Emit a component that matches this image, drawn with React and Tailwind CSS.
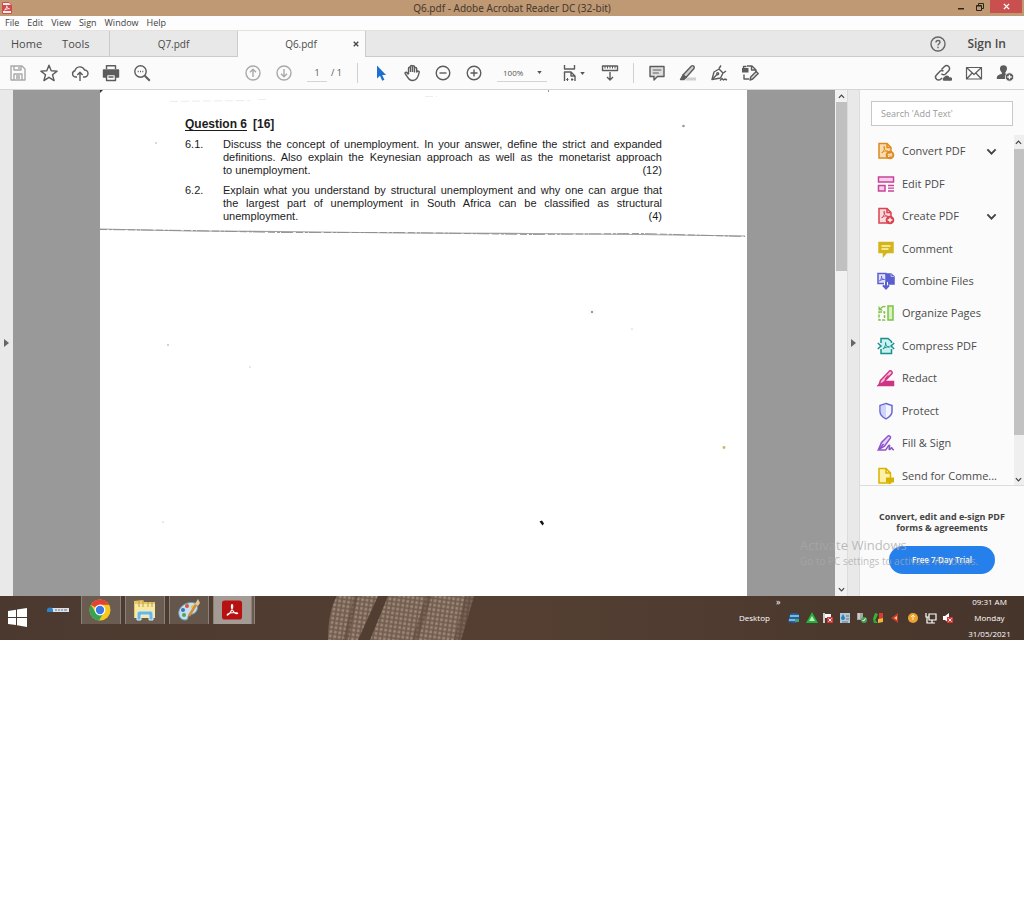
import React from "react";

const TOOL_PATHS = {
  save: (
    <>
      <path d="M2 2h11l3 3v11H2z" />
      <path d="M5 2v4h7V2M10 3v2M5 16v-6h8v6M7 12h4M7 14h4" />
    </>
  ),
  star: <path d="M9 1.200l2.200 5.600 5.900.3-4.600 3.700 1.600 5.800L9 13.300l-5.100 3.300 1.600-5.800L.900 7.100l5.900-.3z" />,
  cloud: (
    <>
      <path d="M6 13H4.500A3.200 3.200 0 0 1 4 6.700 5 5 0 0 1 13.500 6 3.500 3.500 0 0 1 13.500 13H12" />
      <path d="M9 17V8.500M6.300 11L9 8.200l2.700 2.800" />
    </>
  ),
  print: (
    <>
      <path d="M4.500 5V1.800h9V5" />
      <path d="M1.500 6h15v7h-3v-3h-9v3h-3z" fill="currentColor" />
      <path d="M4.500 10.500h9v6h-9zM6.500 13h5" />
    </>
  ),
  search: (
    <>
      <circle cx="7.500" cy="7.500" r="5.700" />
      <path d="M11.800 11.800l5 5" strokeWidth="2" />
      <path d="M4.700 7.500h1M7 7.500h1M9.300 7.500h1" />
    </>
  ),
  up: (
    <>
      <circle cx="9" cy="9" r="7" />
      <path d="M9 13V5.500M6 8.300l3-3 3 3" />
    </>
  ),
  down: (
    <>
      <circle cx="9" cy="9" r="7" />
      <path d="M9 5v7.500M6 9.700l3 3 3-3" />
    </>
  ),
  hand: (
    <path d="M5.500 10V4.500c0-1.600 2-1.600 2 0V8M7.500 8V2.600c0-1.500 2-1.500 2 0V8M9.500 8V2.800c0-1.500 2-1.500 2 0V8.500M11.500 8.500V4.500c0-1.500 2.200-1.400 2.200.2V8c1-1.500 2.800-1 2.500.3-.7 3.400-1.500 8.200-6.200 8.200-4 0-5-2.500-7.800-6.800-.8-1.300 1-2 1.800-1l1.500 1.800" />
  ),
  minus: (
    <>
      <circle cx="9" cy="9" r="6.800" />
      <path d="M5.500 9h7" />
    </>
  ),
  plus: (
    <>
      <circle cx="9" cy="9" r="6.800" />
      <path d="M5.500 9h7M9 5.500v7" />
    </>
  ),
  fit: (
    <>
      <path d="M3.500 1v4h10V1M3.500 17V8h6.500l4 4v5M10 8v4h4" />
      <path d="M5.500 15.500h2M10 15.500h2M7 14l-1.500 1.500L7 17M10.500 14l1.500 1.500-1.500 1.500" strokeWidth="1" />
    </>
  ),
  keyboard: (
    <>
      <path d="M1.500 2h15v4.500h-15z" />
      <path d="M4 2v2.500M6.500 2v2.500M9 2v2.500M11.500 2v2.500M14 2v2.500" strokeWidth="1" />
      <path d="M9 8v8M6 13l3 3 3-3" />
    </>
  ),
  comment: (
    <>
      <path d="M2 2.500h14v10H9.500L6 16v-3.500H2z" fill="#dedede" />
      <path d="M4.800 6h8.500M4.800 9h6" strokeWidth="1.200" />
    </>
  ),
  highlight: (
    <>
      <path d="M6 16.500h11v-3h-8z" fill="#d0d0d0" stroke="none" />
      <path d="M4 11l8.500-9c1.500-1 3.500.5 2.500 2.500L7 13.500z" fill="#cfcfcf" />
      <path d="M4 11l3 2.500-2 2H1.500z" fill="currentColor" />
    </>
  ),
  fountain: (
    <>
      <path d="M2 15.500l2-7.500 5-3 4 4-2.500 5z" />
      <path d="M9 4.500l2-3M13.300 9l2.700-2M2 15.500l5-5" />
      <circle cx="7.700" cy="9.800" r="1" />
      <path d="M10 16.500l2-2 1.500 1.500 1.300-1 2.200 1" />
    </>
  ),
  more: (
    <>
      <path d="M1 4h6.500v4.500H1z" fill="currentColor" stroke="none" />
      <path d="M2.500 4V2.500h3M6 2h5l4 4v2M10.500 2v4h4.500M3 10.500V15h5" />
      <path d="M9 16l.7-3 5.500-5.500 2 2-5.500 5.500z" fill="#ddd" />
    </>
  ),
  link: (
    <>
      <path d="M7.500 5.500L10.500 2.500a2.900 2.900 0 0 1 4.200 4.200L11.500 10a2.900 2.900 0 0 1-4.100-.2M9.500 7.200a2.900 2.900 0 0 0-4 .5L2.500 11a2.900 2.900 0 0 0 4.200 4.200L8 14" strokeWidth="1.500" />
      <path d="M9.500 16.700a2 2 0 0 1 .6-3.500 3 3 0 0 1 5.500.2 1.800 1.800 0 0 1 1.500 3.300z" fill="currentColor" stroke="none" />
    </>
  ),
  mail: <path d="M1.500 3.500h15v11.500h-15zM1.500 3.500L9 10.500l7.500-7M1.500 15l5.700-6M16.500 15l-5.700-6" strokeWidth="1.200" />,
  person: (
    <>
      <path d="M7.500 1.300c5 0 3.800 5.500 1.800 7.200 0 1.500 1 1.700 2.200 2.200-2 1-2.500 2.500-2.300 4.300H.8c0-3 .8-4.200 4.700-5 .7-.3.500-1.200 0-1.800C3.500 6.300 3 1.300 7.500 1.300z" fill="currentColor" stroke="none" />
      <circle cx="13.500" cy="13" r="4.200" fill="currentColor" stroke="#fbfbfb" strokeWidth="0.800" />
      <path d="M13.500 10.800v4.400M11.300 13h4.400" stroke="#fbfbfb" strokeWidth="1.300" />
    </>
  ),
};

function Glyph({ name }) {
  return (
    <svg viewBox="0 0 18 18" className="size-[18px] shrink-0" fill="none" stroke="currentColor" strokeWidth="1.400" strokeLinejoin="round" aria-hidden="true">
      {TOOL_PATHS[name]}
    </svg>
  );
}

function ToolButton({ name, label, faded }) {
  return (
    <button type="button" aria-label={label} className={faded ? "flex h-8 w-[31px] shrink-0 items-center justify-center text-[#a9a9a9]" : "flex h-8 w-[31px] shrink-0 items-center justify-center text-[#5c5c5c]"}>
      <Glyph name={name} />
    </button>
  );
}

function Caret() {
  return (
    <svg viewBox="0 0 6 4" className="h-[3px] w-[5px] shrink-0" aria-hidden="true">
      <path d="M0 0h6L3 4z" fill="#555" />
    </svg>
  );
}

function Chevron({ dir, className }) {
  const d = dir === "up" ? "M1 5.500l3-3 3 3" : "M1 2.500l3 3 3-3";
  return (
    <svg viewBox="0 0 8 8" className={className} fill="none" stroke="#444" strokeWidth="1.400" aria-hidden="true">
      <path d={d} />
    </svg>
  );
}

const SQUIGGLE = "M4.500 11c3-2.500 3.500-5 3-6.500-.6-.8-1 .3-.6 1.500.7 2 2 3 4 3.500M5 11c1.500-2 3.500-2.300 6-1.700";

const TOOLS = [
  { name: "Convert PDF", more: true, color: "#dd8a1e", art: (
    <>
      <path d="M2 1.500h8l4 4V16H2z" fill="#fbdcb0" />
      <path d="M10 1.500v4h4" />
      <path d={SQUIGGLE} strokeWidth="0.900" />
      <circle cx="13" cy="13" r="4.300" fill="#dd8a1e" stroke="none" />
      <path d="M10.700 12.300h4.200l-1.200-1.200M15.300 13.900h-4.200l1.200 1.200" stroke="#fff" strokeWidth="0.900" />
    </>
  ) },
  { name: "Edit PDF", color: "#c8449c", art: (
    <>
      <path d="M1.500 2h15v5h-15zM1.500 10.500H8V16H1.500z" fill="#f9cfe8" />
      <path d="M11 10.500h6M11 13.200h6M11 16h6" strokeWidth="1.300" />
    </>
  ) },
  { name: "Create PDF", more: true, color: "#d9444f", art: (
    <>
      <path d="M2 1.500h8l4 4V16H2z" fill="#fbdadd" />
      <path d="M10 1.500v4h4" />
      <path d={SQUIGGLE} strokeWidth="0.900" />
      <circle cx="13" cy="13" r="4.300" fill="#d9444f" stroke="none" />
      <path d="M10.700 13h4.600M13 10.700v4.600" stroke="#fff" strokeWidth="1.300" />
    </>
  ) },
  { name: "Comment", color: "#d4b51c", art: (
    <>
      <path d="M2 2.500h14v10H9.500L6.500 16v-3.500H2z" fill="#d4b51c" />
      <path d="M4.500 6h9M4.500 9h7" stroke="#fff6b8" strokeWidth="1.300" />
    </>
  ) },
  { name: "Combine Files", color: "#5a5fd0", art: (
    <>
      <path d="M9.500 2h4.500l3 2.500V12H9.500z" fill="#5a5fd0" />
      <path d="M14 2v2.500h3" stroke="#c9cbf5" strokeWidth="0.800" />
      <path d="M1 1.500h8v10H1z" fill="#dfe0fb" />
      <path d="M2.500 9C4.500 7 5 5 4.500 4c-.5 2 1 3.500 3 3.500-2-.2-3.500.3-5 1.500" strokeWidth="0.900" />
      <path d="M9 10v6" stroke="#fbfbfb" strokeWidth="4" />
      <path d="M9 10v6M6 13.300L9 16.500l3-3.200" strokeWidth="2" />
    </>
  ) },
  { name: "Organize Pages", color: "#7fc149", art: (
    <>
      <path d="M11 2h5v14h-5z" fill="#d7f3bd" />
      <path d="M2 8h5.500v8H2z" strokeDasharray="3 1.300" />
      <path d="M4 4.500c1-2 3-2.500 4.500-1.500" />
      <path d="M1.500 2v4.500H6z" fill="#7fc149" stroke="none" />
    </>
  ) },
  { name: "Compress PDF", color: "#17908f", art: (
    <>
      <path d="M4 6V1.500h7l3.500 3V6M4 12v4.500h10.500V12" fill="#c9f1ef" />
      <path d="M4 6h10.500v6H4z" fill="#c9f1ef" stroke="none" />
      <path d="M.800 6L4 9 .800 12M17.200 6L14 9l3.200 3" />
      <path d="M6 12c2.500-2.500 3-5 2.500-6.500-.5 2 1.500 4.500 4 4.500-2.500-.3-4.500.3-6.500 2" strokeWidth="1" />
    </>
  ) },
  { name: "Redact", color: "#cf3485", art: (
    <>
      <path d="M9 12.500h7.500v4H1.500l3-2z" fill="#cf3485" />
      <path d="M3.500 11.500l9-9.500c1.500-.8 3.300.8 2.500 2.500L6.500 13.500 2 16z" fill="#fac4df" />
      <path d="M8 10.500l3.500-4" />
    </>
  ) },
  { name: "Protect", color: "#6668d2", art: (
    <>
      <path d="M9 1.500l6 2v6c0 3.500-3.500 6-6 7.300-2.500-1.300-6-3.800-6-7.300v-6z" fill="#f4f4ff" />
      <path d="M9 2.300v13.600c-2.200-1.200-5.200-3.400-5.200-6.400V4z" fill="#cfd4fb" stroke="none" />
    </>
  ) },
  { name: "Fill & Sign", color: "#8d55cb", art: (
    <>
      <path d="M1.500 15.500l3-7 6.500-6.500c1.300-.7 3 .5 2.300 2.200l-5.800 8z" fill="#e6d4fa" />
      <path d="M1.500 16h7c2-2 2.500-5 4-4.700 1 .4-1.500 4.500.3 4.200 1.200-.2 1-2 1.900-1.800.8.300 0 2.300 2.300 2M2 15.500l4.500-5.500" />
    </>
  ) },
  { name: "Send for Comme...", color: "#d8b200", art: (
    <>
      <path d="M2 1.500h7l4.500 4.500v10H2z" fill="#fff0a8" />
      <path d="M9 1.500V6h4.500" />
      <path d="M9 10.500h8v5h-3l-2 2v-2H9z" fill="#d8b200" stroke="none" />
    </>
  ) },
];

function ToolRow({ tool }) {
  return (
    <li className="flex items-center">
      <button type="button" className="flex w-full items-center gap-[7px] pl-[17px] pr-[17px] text-left text-[11px] leading-4 text-[#4b4b4b]">
        <svg viewBox="0 0 18 18" className="size-[18px] shrink-0" fill="none" stroke={tool.color} strokeWidth="1.500" aria-hidden="true">
          {tool.art}
        </svg>
        <span className="grow whitespace-nowrap">{tool.name}</span>
        {tool.more && <Chevron dir="down" className="size-[11px]" />}
      </button>
    </li>
  );
}

function TitleBar() {
  return (
    <header className="flex h-4 items-start bg-[#bf9974] text-[#46382c]">
      <div className="flex h-4 flex-1 items-center pl-[2px]">
        <svg viewBox="0 0 10 12" className="h-3 w-[10px]" aria-hidden="true">
          <path d="M.5.500h6.500l2.500 2.500v8.500h-9z" fill="#fbeeee" stroke="#d2494b" />
          <path d="M1 3h8v6H1z" fill="#d2494b" />
          <path d="M2.500 8.200c1.700-1.500 2.300-3.400 2.200-4.400.2 2 1.300 2.700 2.800 2.900-1.500 0-3.500.3-5 1.500z" stroke="#fff" strokeWidth="0.800" fill="none" />
        </svg>
      </div>
      <h1 className="font-['Noto_Sans',sans-serif] text-[10px] leading-4">Q6.pdf - Adobe Acrobat Reader DC (32-bit)</h1>
      <div className="flex flex-1 items-start justify-end pr-[2px]">
        <button type="button" aria-label="Minimize" className="flex h-[13px] w-[18px] items-center justify-center">
          <svg viewBox="0 0 8 8" className="size-2" aria-hidden="true"><path d="M1 5h6v1.500H1z" fill="#2d231b" /></svg>
        </button>
        <button type="button" aria-label="Restore" className="flex h-[13px] w-5 items-center justify-center">
          <svg viewBox="0 0 8 8" className="size-2" fill="none" stroke="#2d231b" aria-hidden="true"><path d="M.5 2.500h5v5h-5zM.5 3h5M2.500 2.500v-2h5v5h-2" /></svg>
        </button>
        <button type="button" aria-label="Close" className="flex h-[13px] w-8 items-center justify-center bg-[#c9504f]">
          <svg viewBox="0 0 8 8" className="size-[7px]" stroke="#fff" strokeWidth="1.600" aria-hidden="true"><path d="M1 1l6 6M7 1L1 7" /></svg>
        </button>
      </div>
    </header>
  );
}

function MenuBar() {
  return (
    <nav className="flex h-[15px] items-center gap-2 border-b border-[#e6e1da] bg-[#fdfdfd] pl-[5px] text-[9px] leading-3 text-[#3f3f3f]">
      {["File", "Edit", "View", "Sign", "Window", "Help"].map((m) => (
        <button type="button" key={m}>{m}</button>
      ))}
    </nav>
  );
}

function TabBar() {
  return (
    <div className="flex h-[26px] bg-[#e8e8e8] text-[11px] leading-4 text-[#4a4a4a]">
      <div className="flex w-[110px] items-center gap-5 border-b border-r border-[#cbcbcb] pl-[11px]">
        <button type="button">Home</button>
        <button type="button">Tools</button>
      </div>
      <button type="button" className="w-32 border-b border-r border-[#cbcbcb] text-[10px]">Q7.pdf</button>
      <div className="flex w-32 items-center border-r border-[#cbcbcb] bg-[#fbfbfb] pr-1">
        <button type="button" className="grow pl-[13px] text-center text-[10px]">Q6.pdf</button>
        <button type="button" aria-label="Close Q6.pdf" className="flex size-[10px] items-center justify-center">
          <svg viewBox="0 0 8 8" className="size-[6px]" stroke="#444" strokeWidth="1.800" aria-hidden="true"><path d="M1 1l6 6M7 1L1 7" /></svg>
        </button>
      </div>
      <div className="flex grow items-center justify-end gap-[21px] border-b border-[#cbcbcb] pr-[18px]">
        <button type="button" aria-label="Help">
          <svg viewBox="0 0 16 16" className="size-4" fill="none" stroke="#666" strokeWidth="1.400" aria-hidden="true">
            <circle cx="8" cy="8" r="7" />
            <path d="M6 6.500c0-2.700 4-2.500 4-.2C10 7.800 8 7.800 8 9.500M8 10.700v1.500" />
          </svg>
        </button>
        <button type="button" className="text-[12px] font-semibold">Sign In</button>
      </div>
    </div>
  );
}

function Toolbar() {
  return (
    <div className="flex h-[33px] items-center border-b border-[#d5d5d5] bg-[#fbfbfb] pl-[2px] pr-1 text-[9px] text-[#555]">
      <ToolButton name="save" label="Save" faded />
      <ToolButton name="star" label="Star" />
      <ToolButton name="cloud" label="Upload" />
      <ToolButton name="print" label="Print" />
      <ToolButton name="search" label="Find" />
      <div className="ml-20 flex">
        <ToolButton name="up" label="Previous page" faded />
        <ToolButton name="down" label="Next page" faded />
      </div>
      <input aria-label="Page number" defaultValue="1" className="ml-2 h-[18px] w-5 border-b border-[#d5d5d5] text-center" />
      <span className="ml-1 w-[27px] border-r border-[#d0d0d0] py-[3px]">/ 1</span>
      <div className="ml-[7px] flex">
        <button type="button" aria-label="Select" className="flex h-8 w-[31px] items-center justify-center">
          <svg viewBox="0 0 18 18" className="size-[18px]" aria-hidden="true"><path d="M5 1.500v13l3-2.800 2.200 5 2.200-1-2.200-4.700H14z" fill="#1f6fd0" /></svg>
        </button>
        <ToolButton name="hand" label="Pan" />
        <ToolButton name="minus" label="Zoom out" />
        <ToolButton name="plus" label="Zoom in" />
      </div>
      <div className="ml-2 flex h-[18px] w-[50px] items-center border-b border-[#d5d5d5] pr-[5px]">
        <select aria-label="Zoom level" className="min-w-0 grow appearance-none bg-transparent pl-[6px] text-[8px]">
          <option>100%</option>
        </select>
        <Caret />
      </div>
      <button type="button" aria-label="Fit page" className="ml-[14px] flex items-center gap-[1px] text-[#5c5c5c]">
        <Glyph name="fit" />
        <Caret />
      </button>
      <div className="ml-[9px] flex border-r border-[#d0d0d0] pr-2">
        <button type="button" aria-label="Page display" className="flex h-5 w-[31px] items-center justify-center text-[#5c5c5c]">
          <Glyph name="keyboard" />
        </button>
      </div>
      <div className="ml-[7px] flex">
        <ToolButton name="comment" label="Add comment" />
        <ToolButton name="highlight" label="Highlight" />
        <ToolButton name="fountain" label="Sign" />
        <ToolButton name="more" label="More tools" />
      </div>
      <div className="ml-auto flex">
        <ToolButton name="link" label="Share link" />
        <ToolButton name="mail" label="Send by email" />
        <ToolButton name="person" label="Add people" />
      </div>
    </div>
  );
}

function Question({ number, marks, last, children }) {
  return (
    <div className="flex text-[11px] leading-[13px]">
      <span className="w-[38px] shrink-0">{number}</span>
      <div className="grow">
        <p className="text-justify [text-align-last:justify]">{children}</p>
        <p className="flex justify-between"><span>{last}</span><span>{marks}</span></p>
      </div>
    </div>
  );
}

function ScanMarks() {
  return (
    <svg viewBox="0 0 647 506" className="absolute left-0 top-0 w-full" fill="#999" aria-hidden="true">
      <path d="M0 139L90 141 180 141.500 300 143 430 143.500 540 144.500 645 146" fill="none" stroke="#a2a2a2" strokeWidth="1.200" />
      <path d="M0 139.500L90 140.500 180 142.500 300 142.500 430 144.500 540 143.500 645 146.500" fill="none" stroke="#8c8c8c" strokeWidth="0.900" strokeDasharray="7 2 3 1 12 3" />
      <path d="M70 11.500l80-1M158 9.500h10M325 6.500h12" stroke="#ededed" strokeDasharray="8 3" />
      <path d="M0 0h3L0 3z" fill="#333" />
      <rect x="448" y="0" width="1" height="2" />
      <circle cx="583.500" cy="36" r="1.300" />
      <circle cx="56" cy="53" r="0.700" />
      <circle cx="492" cy="222" r="1.200" />
      <circle cx="532" cy="239" r="0.600" />
      <circle cx="68" cy="255" r="0.800" />
      <circle cx="150" cy="277" r="0.600" />
      <circle cx="624" cy="357.500" r="1.400" fill="#c9b95c" />
      <circle cx="63" cy="432" r="0.600" />
      <path d="M439.500 431.500l2.500-1 2 3-1.500 2z" fill="#111" />
    </svg>
  );
}

function Document() {
  return (
    <main className="flex grow justify-center bg-[#999] pr-px">
      <article className="relative w-[647px] shrink-0 bg-white pb-8 pl-[85px] pr-[85px] pt-[27px] font-['Liberation_Sans',Arial,sans-serif] text-[#1c1c1c]">
        <ScanMarks />
        <h2 className="mb-[7px] text-[12px] font-bold leading-[14px]"><span className="mr-[6px] underline underline-offset-2">Question 6</span>[16]</h2>
        <div className="flex flex-col gap-[7px]">
          <Question number="6.1." marks="(12)" last="to unemployment.">
            Discuss the concept of unemployment. In your answer, define the strict and expanded<br />
            definitions. Also explain the Keynesian approach as well as the monetarist approach
          </Question>
          <Question number="6.2." marks="(4)" last="unemployment.">
            Explain what you understand by structural unemployment and why one can argue that<br />
            the largest part of unemployment in South Africa can be classified as structural
          </Question>
        </div>
      </article>
    </main>
  );
}

function Sidebar() {
  return (
    <aside className="w-[164px] shrink-0 bg-[#fbfbfb]">
      <div className="flex px-[11px] pb-[9px] pt-[11px]">
        <input type="search" aria-label="Search tools" placeholder="Search 'Add Text'" className="h-[25px] w-full border border-[#c8c8c8] bg-white px-[9px] text-[9px] placeholder:text-[#9a9a9a]" />
      </div>
      <div className="flex h-[351px] overflow-hidden border-b border-[#dcdcdc]">
        <ul className="grid h-[357px] grow auto-rows-fr">
          {TOOLS.map((t) => <ToolRow key={t.name} tool={t} />)}
        </ul>
        <div className="flex w-[11px] flex-col items-center bg-[#efefef] pb-[2px] pt-1">
          <Chevron dir="up" className="size-[7px]" />
          <div className="mt-[3px] h-[286px] w-[10px] bg-[#c2c2c2]" />
          <Chevron dir="down" className="mt-auto size-[7px]" />
        </div>
      </div>
      <div className="flex flex-col items-center px-2 pb-[22px] pt-[25px] text-center">
        <p className="text-[9px] font-bold leading-[11px] text-[#444]">Convert, edit and e-sign PDF<br />forms &amp; agreements</p>
        <button type="button" className="mt-[13px] h-7 w-[106px] rounded-full bg-[#2680eb] text-[8px] font-semibold text-white">Free 7-Day Trial</button>
      </div>
    </aside>
  );
}

function Taskbar() {
  const box = "flex h-7 items-center justify-center border-x border-[#8c8178] ";
  return (
    <footer className="relative flex h-11 items-start bg-[#4e3b30] bg-linear-to-r from-[#4b392f] via-[#553f33] to-[#46352b] text-[8px] leading-[10px] text-white">
      <svg viewBox="0 0 150 44" className="absolute left-[328px] top-0 h-11 w-[150px]" aria-hidden="true">
        <defs>
          <pattern id="gingham" width="4.500" height="4.500" patternUnits="userSpaceOnUse" patternTransform="rotate(8)">
            <rect width="4.500" height="4.500" fill="#8a7366" />
            <path d="M0 1h4.500M1 0v4.500" stroke="#6f5a4b" strokeWidth="1.300" />
            <path d="M2.300 2.300h2v2h-2z" fill="#a08a7c" />
          </pattern>
        </defs>
        <path d="M9 0h41L30 44H0C0 25 3 10 9 0zM60 0h86l-13 44H42z" fill="url(#gingham)" />
        <path d="M104 0L90 44h-6L98 0zM146 0l-13 44h-7l11-44zM30 0L20 44h-5L26 0z" fill="#584337" opacity=".5" />
      </svg>
      <button type="button" aria-label="Start" className="ml-2 mt-3">
        <svg viewBox="0 0 20 19" className="h-[19px] w-5" fill="#fff" aria-hidden="true"><path d="M0 3l8-1.200V9H0zM9 1.600L19 0v9H9zM0 10h8v7L0 16zM9 10h10v9l-10-1.700z" /></svg>
      </button>
      <button type="button" aria-label="Printer utility" className="ml-[18px] mt-[11px] flex">
        <svg viewBox="0 0 24 6" className="h-[6px] w-6" aria-hidden="true">
          <rect x="6" y="1" width="17" height="4" fill="#dce3e8" />
          <path d="M1 3a3 2.500 0 0 1 6 0v2H1z" fill="#2d83c8" />
          <path d="M9 3h2M12 3h2M15 3h2M18 3h3" stroke="#667787" />
        </svg>
      </button>
      <div className="ml-[11px] flex gap-1">
        <button type="button" aria-label="Chrome" className={box + "w-10 bg-[#6b5c52] pr-[3px]"}>
          <svg viewBox="0 0 24 24" className="size-6" aria-hidden="true">
            <circle cx="12" cy="12" r="10.500" fill="#f6c920" />
            <path d="M12 12L2.900 6.800A10.500 10.500 0 0 1 21.100 6.800H12z" fill="#e24336" />
            <path d="M2.900 6.800A10.500 10.500 0 0 0 11 22.500l5-8.500-8.500.500z" fill="#36a351" />
            <circle cx="12" cy="12" r="5.400" fill="#fff" />
            <circle cx="12" cy="12" r="4.200" fill="#3c78e6" />
          </svg>
        </button>
        <button type="button" aria-label="File Explorer" className={box + "w-10 bg-[#6b5c52]"}>
          <svg viewBox="0 0 24 22" className="h-[22px] w-6" aria-hidden="true">
            <path d="M1 2l9-1 1 2h11v16H1z" fill="#e6c765" />
            <path d="M2 5h20v14H2z" fill="#f8e9a0" />
            <path d="M6 2v6M10 1v7M15 3v5M19 3v5" stroke="#bc9d48" />
            <path d="M4 21v-6c0-3 3-3 4-3h8c2 0 4 0 4 3v6h-4v-5H8v5z" fill="#6eb6de" stroke="#d8f0fb" />
          </svg>
        </button>
        <button type="button" aria-label="Paint" className={box + "w-10 bg-[#65564c]"}>
          <svg viewBox="0 0 24 24" className="size-6" aria-hidden="true">
            <path d="M11 5c7-2 11 2 9 7-2 5-7 4-8 5-2 2 0 5-4 5C3 22 1 17 2 13c1-4 5-7 9-8z" fill="#c5dfec" stroke="#6d9ebb" />
            <circle cx="6" cy="12" r="2" fill="#3972bd" /><circle cx="10" cy="8" r="2" fill="#df5135" /><circle cx="16" cy="9" r="2" fill="#edc339" /><circle cx="7" cy="17" r="2" fill="#4ea655" />
            <path d="M12 18L20 5" stroke="#d68a3a" strokeWidth="2.500" /><path d="M18 6l3-5 2 4-2 3z" fill="#e6c99a" />
          </svg>
        </button>
        <button type="button" aria-label="Adobe Acrobat" className={box + "w-[39px] bg-[#a49b94]"}>
          <svg viewBox="0 0 22 20" className="h-5 w-[21px]" aria-hidden="true">
            <rect x="0" y="0" width="21" height="20" rx="3" fill="#b71212" />
            <path d="M5.500 15.500c-1-2 6-3.500 10.500-2.500 1.500 1-1.500 1.200-3-.3-2-2-3.500-5.500-3-8 .7-1.500 1.800 1 1 3C10 11 7 15.500 5.500 15.500z" fill="none" stroke="#fff" strokeWidth="1.200" />
          </svg>
        </button>
      </div>
      <div className="h-7 w-[3px] border-r border-[#8c8178] bg-[#6b5c52]" />
      <div className="ml-auto mt-4 flex w-[216px] items-center">
        <span className="relative w-[49px]">Desktop<span className="absolute -top-[16px] left-[37px] text-[9px]">»</span></span>
        <svg viewBox="0 0 167 12" className="h-3 w-[167px]" aria-hidden="true">
          <path d="M2 2l4-1 5 1v8l-5 1-6-1z" fill="#2b5ea8" /><path d="M2 4h9M1 8h8" stroke="#8edbe9" strokeWidth="1.500" /><path d="M7 7h4v3H7z" fill="#42a56c" />
          <path d="M24 0l6 11H18z" fill="#28ae3b" /><path d="M24 4l3 5h-6z" fill="#b3efbb" />
          <path d="M36 1v10" stroke="#fff" strokeWidth="1.500" /><path d="M37 2h6v4h-6z" fill="#fff" /><rect x="39" y="5" width="6" height="6" fill="#d93333" /><path d="M40.500 6.500l3 3M43.500 6.500l-3 3" stroke="#fff" />
          <rect x="52" y="1" width="10" height="10" fill="#b1c8d4" /><path d="M55 2l2 4a2 2 0 1 1-4 0z" fill="#267ebd" /><path d="M58 4h3M58 7h3M54 10h6" stroke="#647984" />
          <rect x="69" y="1" width="6" height="7" fill="#a5a5a5" /><path d="M71 1v6" stroke="#eee" /><circle cx="76" cy="8" r="3" fill="#4ba356" /><path d="M74.500 8l1 1 2-2.500" stroke="#fff" fill="none" />
          <path d="M87 1l3 1-4 9-1-4z" fill="#32b63c" /><path d="M91 1h4v5l-4 1z" fill="#dd3b32" /><path d="M90 7l5-1v4l-5 1z" fill="#efb637" /><path d="M86 7l4 4h-4z" fill="#2eaa3a" />
          <path d="M110 1v10l-7-5z" fill="#c73c22" /><path d="M109 4v4l-3-2z" fill="#ffc6a6" />
          <circle cx="125" cy="6" r="5" fill="#eba332" /><path d="M125 3v5M123 5l2-2 2 2" stroke="#fff0bd" fill="none" />
          <path d="M141 2h7v6h-7zM144 8v3M141 11h6M138 1v4h3M139 5v6h2" stroke="#fff" strokeWidth="1.200" fill="none" />
          <path d="M155 4h2l4-3v10l-4-3h-2z" fill="#fff" /><rect x="159" y="5" width="6" height="6" fill="#d93333" /><path d="M160.500 6.500l3 3M163.500 6.500l-3 3" stroke="#fff" />
        </svg>
      </div>
      <div className="flex w-[69px] flex-col items-center gap-[6px] whitespace-nowrap pt-px">
        <span>09:31 AM</span>
        <span>Monday</span>
        <span>31/05/2021</span>
      </div>
    </footer>
  );
}

export default function App() {
  return (
    <div className="min-h-screen bg-white font-['Open_Sans','Noto_Sans',sans-serif]">
      <TitleBar />
      <MenuBar />
      <TabBar />
      <Toolbar />
      <div className="relative flex min-h-[506px]">
        <button type="button" aria-label="Show navigation pane" className="flex w-[13px] shrink-0 items-center justify-center bg-[#e9e9e9]">
          <svg viewBox="0 0 5 8" className="h-2 w-[5px]" aria-hidden="true"><path d="M0 0l5 4-5 4z" fill="#666" /></svg>
        </button>
        <Document />
        <div className="flex w-3 shrink-0 flex-col items-center bg-[#f1f1f1] pb-[3px] pt-[3px]">
          <Chevron dir="up" className="size-[7px]" />
          <div className="mt-[2px] h-[169px] w-[11px] bg-[#c0c0c0]" />
          <Chevron dir="down" className="mt-auto size-[7px]" />
        </div>
        <button type="button" aria-label="Hide tools pane" className="flex w-[13px] shrink-0 items-center justify-center border-x border-[#dcdcdc] bg-[#e9e9e9]">
          <svg viewBox="0 0 5 8" className="h-2 w-[5px]" aria-hidden="true"><path d="M0 0l5 4-5 4z" fill="#666" /></svg>
        </button>
        <Sidebar />
        <div className="pointer-events-none absolute bottom-[28px] right-[43px] w-[181px] whitespace-nowrap text-[#a8a8a8]/75">
          <p className="text-[13px] leading-[18px]">Activate Windows</p>
          <p className="text-[10px] leading-[14px]">Go to PC settings to activate Windows.</p>
        </div>
      </div>
      <Taskbar />
    </div>
  );
}
